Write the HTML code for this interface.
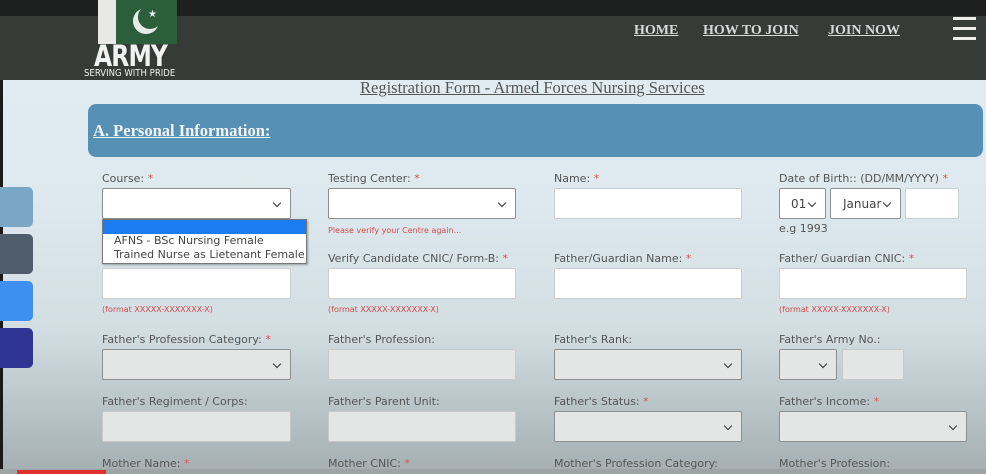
<!DOCTYPE html>
<html><head><meta charset="utf-8"><style>
*{box-sizing:border-box;margin:0;padding:0}
body{width:986px;height:474px;overflow:hidden;position:relative;font-family:"DejaVu Sans","Liberation Sans",sans-serif;background:linear-gradient(to bottom,#e2eef3 0px,#dde9ee 200px,#d2dee2 330px,#b5c0c3 420px,#a5afb1 474px)}
.a{position:absolute}
.lbl{position:absolute;font-size:11px;color:#555;white-space:nowrap}
.r{color:#e05050}
.in{position:absolute;height:31px;border:1px solid #c8cfd2;background:#fff;border-radius:2px}
.g{background:#e4e6e6;border-color:#c6caca}
.sel{border-color:#8a8f92}
.sel::after{content:"";position:absolute;right:10px;top:11px;width:5px;height:5px;border-right:1.5px solid #333;border-bottom:1.5px solid #333;transform:rotate(45deg)}
.fmt{position:absolute;font-size:8px;color:#d84a4a;white-space:nowrap}
.nav{position:absolute;top:23px;font-family:"Liberation Serif",serif;font-weight:bold;font-size:14px;color:#d6dadb;text-decoration:underline}
</style></head><body>
<div class="a" style="left:0;top:0;width:3px;height:474px;background:#1a1a1a"></div>
<div class="a" style="left:0;top:0;width:986px;height:16px;background:#1e201f"></div>
<div class="a" style="left:0;top:16px;width:986px;height:64px;background:#363b38"></div>
<div class="a" style="left:98px;top:0;width:18px;height:44px;background:#e8e8e6"></div>
<div class="a" style="left:116px;top:0;width:61px;height:44px;background:#2c5e3c"></div>
<div class="a" style="left:133px;top:8px;width:26px;height:26px;border-radius:50%;background:#e8ece8"></div>
<div class="a" style="left:138px;top:5px;width:24px;height:24px;border-radius:50%;background:#2c5e3c"></div>
<div class="a" style="left:148px;top:9px;color:#e8ece8;font-size:10px">★</div>
<div class="a" style="left:94px;top:39px;font-family:'DejaVu Sans Condensed','DejaVu Sans',sans-serif;font-weight:bold;font-size:29px;color:#f2f2f2;letter-spacing:-1px;transform:scaleX(.9);transform-origin:left">ARMY</div>
<div class="a" style="left:84px;top:68px;font-family:'DejaVu Sans Condensed','Liberation Sans',sans-serif;font-size:10px;color:#f2f2f2;transform:scaleX(.95);transform-origin:left">SERVING WITH PRIDE</div>
<div class="nav" style="left:634px">HOME</div>
<div class="nav" style="left:703px">HOW TO JOIN</div>
<div class="nav" style="left:828px">JOIN NOW</div>
<div class="a" style="left:953px;top:17px;width:23px;height:3px;background:#eee;box-shadow:0 10px 0 #eee,0 20px 0 #eee"></div>
<div class="a" style="left:360px;top:78px;font-family:'Liberation Serif',serif;font-size:16.5px;color:#555;text-decoration:underline">Registration Form - Armed Forces Nursing Services</div>
<div class="a" style="left:88px;top:104px;width:895px;height:53px;background:#5790b5;border-radius:8px"></div>
<div class="a" style="left:93px;top:121px;font-family:'Liberation Serif',serif;font-weight:bold;font-size:16.5px;color:#f2f4f6;text-decoration:underline">A. Personal Information:</div>
<div class="a" style="left:0;top:187px;width:33px;height:40px;background:#7ba7c6;border-radius:0 5px 5px 0"></div>
<div class="a" style="left:0;top:234px;width:33px;height:40px;background:#4f5c6c;border-radius:0 5px 5px 0"></div>
<div class="a" style="left:0;top:281px;width:33px;height:40px;background:#3e8ff0;border-radius:0 5px 5px 0"></div>
<div class="a" style="left:0;top:328px;width:33px;height:40px;background:#2e3592;border-radius:0 5px 5px 0"></div>
<div class="lbl" style="left:102px;top:172px">Course: <span class="r">*</span></div>
<div class="in sel" style="left:102px;top:188px;width:189px"></div>
<div class="lbl" style="left:328px;top:172px">Testing Center: <span class="r">*</span></div>
<div class="in sel" style="left:328px;top:188px;width:188px"></div>
<div class="fmt" style="left:328px;top:226px">Please verify your Centre again...</div>
<div class="lbl" style="left:554px;top:172px">Name: <span class="r">*</span></div>
<div class="in" style="left:554px;top:188px;width:188px"></div>
<div class="lbl" style="left:779px;top:172px">Date of Birth:: (DD/MM/YYYY) <span class="r">*</span></div>
<div class="in sel" style="left:779px;top:188px;width:47px;font-size:12px;color:#444;padding:8px 0 0 11px">01</div>
<div class="in sel" style="left:830px;top:188px;width:71px;font-size:12px;color:#444;padding:8px 0 0 12px">Januar</div>
<div class="in" style="left:905px;top:188px;width:54px"></div>
<div class="lbl" style="left:779px;top:222px">e.g 1993</div>
<div class="a" style="left:102px;top:219px;width:205px;height:45px;background:#fff;border:1px solid #777;box-shadow:1px 1px 2px rgba(0,0,0,.3)">
<div style="height:14px;background:#1a7cf0"></div>
<div style="font-size:11px;color:#444;padding-left:11px;line-height:14px">AFNS - BSc Nursing Female<br>Trained Nurse as Lietenant Female</div>
</div>
<div class="lbl" style="left:328px;top:252px">Verify Candidate CNIC/ Form-B: <span class="r">*</span></div>
<div class="lbl" style="left:554px;top:252px">Father/Guardian Name: <span class="r">*</span></div>
<div class="lbl" style="left:779px;top:252px">Father/ Guardian CNIC: <span class="r">*</span></div>
<div class="in" style="left:102px;top:268px;width:189px"></div>
<div class="in" style="left:328px;top:268px;width:188px"></div>
<div class="in" style="left:554px;top:268px;width:188px"></div>
<div class="in" style="left:779px;top:268px;width:188px"></div>
<div class="fmt" style="left:102px;top:305px">(format XXXXX-XXXXXXX-X)</div>
<div class="fmt" style="left:328px;top:305px">(format XXXXX-XXXXXXX-X)</div>
<div class="fmt" style="left:779px;top:305px">(format XXXXX-XXXXXXX-X)</div>
<div class="lbl" style="left:102px;top:333px">Father's Profession Category: <span class="r">*</span></div>
<div class="lbl" style="left:328px;top:333px">Father's Profession:</div>
<div class="lbl" style="left:554px;top:333px">Father's Rank:</div>
<div class="lbl" style="left:779px;top:333px">Father's Army No.:</div>
<div class="in g sel" style="left:102px;top:349px;width:189px"></div>
<div class="in g" style="left:328px;top:349px;width:188px"></div>
<div class="in g sel" style="left:554px;top:349px;width:188px"></div>
<div class="in g sel" style="left:779px;top:349px;width:58px"></div>
<div class="in g" style="left:842px;top:349px;width:62px"></div>
<div class="lbl" style="left:102px;top:395px">Father's Regiment / Corps:</div>
<div class="lbl" style="left:328px;top:395px">Father's Parent Unit:</div>
<div class="lbl" style="left:554px;top:395px">Father's Status: <span class="r">*</span></div>
<div class="lbl" style="left:779px;top:395px">Father's Income: <span class="r">*</span></div>
<div class="in g" style="left:102px;top:411px;width:189px"></div>
<div class="in g" style="left:328px;top:411px;width:188px"></div>
<div class="in g sel" style="left:554px;top:411px;width:188px"></div>
<div class="in g sel" style="left:779px;top:411px;width:188px"></div>
<div class="lbl" style="left:102px;top:457px">Mother Name: <span class="r">*</span></div>
<div class="lbl" style="left:328px;top:457px">Mother CNIC: <span class="r">*</span></div>
<div class="lbl" style="left:554px;top:457px">Mother's Profession Category:</div>
<div class="lbl" style="left:779px;top:457px">Mother's Profession:</div>
<div class="a" style="left:0;top:469px;width:986px;height:5px;background:#9da4a6"></div>
<div class="a" style="left:17px;top:470px;width:89px;height:4px;background:#e03030"></div>
</body></html>
